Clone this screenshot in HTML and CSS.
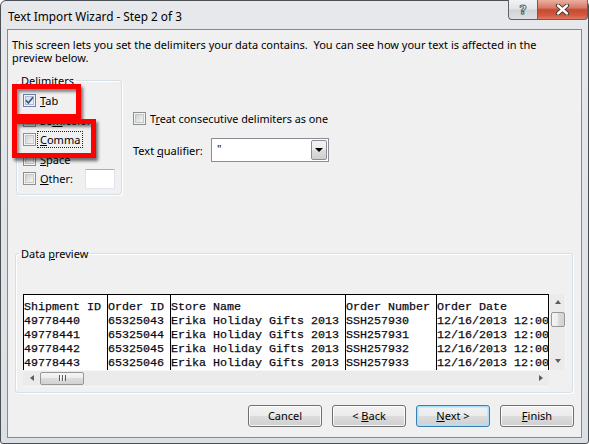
FILE: index.html
```html
<!DOCTYPE html>
<html>
<head>
<meta charset="utf-8">
<title>Text Import Wizard</title>
<link rel="stylesheet" href="styles.css">
</head>
<body>
<div class="window">
  <div class="titlebar">
    <span class="title">Text Import Wizard - Step 2 of 3</span>
    <div class="caption">
      <div class="cap help"><span class="qmark">?</span></div>
      <div class="cap close">
        <svg width="15" height="11" viewBox="0 0 15 11"><path d="M3 1.5 L12 9.5 M12 1.5 L3 9.5" stroke="#3b2a28" stroke-width="4.2" stroke-linecap="round" fill="none"/><path d="M3 1.5 L12 9.5 M12 1.5 L3 9.5" stroke="#fff" stroke-width="2.4" stroke-linecap="round" fill="none"/></svg>
      </div>
    </div>
  </div>
  <div class="client">
    <p class="intro">This screen lets you set the delimiters your data contains.&nbsp; You can see how your text is affected in the<br>preview below.</p>
    <div class="options">
      <fieldset class="group delims">
        <legend>Delimiters</legend>
        <div class="row"><span class="cb checked"><span class="cbi"><svg width="9" height="9" viewBox="0 0 9 9"><path d="M1 4.2 L3.4 7 L8 1.2" stroke="#3f4f86" stroke-width="1.7" fill="none"/></svg></span></span><span class="lbl"><u>T</u>ab</span></div>
        <div class="row"><span class="cb"><span class="cbi"></span></span><span class="lbl">Se<u>m</u>icolon</span></div>
        <div class="row"><span class="cb"><span class="cbi"></span></span><span class="lbl focus"><u>C</u>omma</span></div>
        <div class="row"><span class="cb"><span class="cbi"></span></span><span class="lbl"><u>S</u>pace</span></div>
        <div class="row"><span class="cb"><span class="cbi"></span></span><span class="lbl"><u>O</u>ther:</span><span class="textbox"></span></div>
      </fieldset>
      <div class="opts-right">
        <div class="row"><span class="cb"><span class="cbi"></span></span><span class="lbl">T<u>r</u>eat consecutive delimiters as one</span></div>
        <div class="qual">
          <span class="qlabel">Text <u>q</u>ualifier:</span>
          <div class="combo"><span class="val">"</span><span class="drop"><span class="tri-down"></span></span></div>
        </div>
      </div>
    </div>
    <fieldset class="group preview">
      <legend>Data <u>p</u>review</legend>
      <div class="pv">
        <div class="pv-main">
          <div class="grid">
            <div class="col c1">Shipment ID
49778440
49778441
49778442
49778443</div>
            <div class="col c2">Order ID
65325043
65325044
65325045
65325046</div>
            <div class="col c3">Store Name
Erika Holiday Gifts 2013
Erika Holiday Gifts 2013
Erika Holiday Gifts 2013
Erika Holiday Gifts 2013</div>
            <div class="col c4">Order Number
SSH257930
SSH257931
SSH257932
SSH257933</div>
            <div class="col c5">Order Date
12/16/2013 12:00:00 AM
12/16/2013 12:00:00 AM
12/16/2013 12:00:00 AM
12/16/2013 12:00:00 AM</div>
          </div>
          <div class="hscroll">
            <span class="sbtn"><span class="tri-left"></span></span>
            <span class="hthumb"><span class="grip"></span></span>
            <span class="htrack"></span>
            <span class="sbtn"><span class="tri-right"></span></span>
          </div>
        </div>
        <div class="vcol">
          <div class="vscroll">
            <span class="sbtn"><span class="tri-up"></span></span>
            <span class="vthumb"></span>
            <span class="vtrack"></span>
            <span class="sbtn"><span class="tri-down small"></span></span>
          </div>
        </div>
      </div>
    </fieldset>
    <div class="buttons">
      <span class="btn"><span>Cancel</span></span>
      <span class="btn"><span>&lt; <u>B</u>ack</span></span>
      <span class="btn default"><span><u>N</u>ext &gt;</span></span>
      <span class="btn"><span><u>F</u>inish</span></span>
    </div>
  </div>
  <div class="hl hl1"></div>
  <div class="hl hl2"></div>
</div>
</body>
</html>
```
FILE: styles.css
```css
* { box-sizing: border-box; }
html, body { margin: 0; padding: 0; }
body {
  width: 589px;
  height: 444px;
  overflow: hidden;
  background: #fff;
  font-family: "Noto Sans", "Open Sans", sans-serif;
  font-size: 11px;
  color: #000;
}
u { text-decoration: underline; text-underline-offset: 1px; }

.window {
  position: relative;
  width: 589px;
  height: 444px;
  border: 1px solid #4b5057;
  border-radius: 6px 6px 3px 3px;
  background: linear-gradient(#e6e8eb, #dcdfe3);
  display: flex;
  flex-direction: column;
}

.titlebar {
  height: 28px;
  flex: none;
  display: flex;
  align-items: flex-start;
}
.title {
  font-size: 11.8px;
  line-height: 16px;
  padding: 7px 0 0 7px;
}
.caption {
  margin-left: auto;
  margin-top: -1px;
  display: flex;
}
.cap {
  height: 20px;
  display: flex;
  align-items: center;
  justify-content: center;
  border: 1px solid #5d6168;
  border-top: none;
}
.help {
  width: 29px;
  border-right: none;
  border-radius: 0 0 0 4px;
  background: linear-gradient(#f2f3f5, #e1e3e6 48%, #cfd2d6 52%, #dfe1e4);
}
.qmark {
  font-family: "DejaVu Sans", sans-serif;
  font-weight: bold;
  font-size: 13px;
  line-height: 13px;
  color: #f4f4f4;
  -webkit-text-stroke: 0.9px #555a60;
}
.close {
  width: 51px;
  border-radius: 0 0 4px 0;
  background: linear-gradient(#eab0a2, #d77b66 40%, #c64a33 52%, #d2583f 80%, #e07a5f);
}

.client {
  flex: 1;
  margin: 0 6px 5px 6px;
  border: 1px solid #858a91;
  background: #f0f0f0;
  display: flex;
  flex-direction: column;
}
.intro {
  margin: 0;
  padding: 8px 0 0 4px;
  line-height: 13px;
}

.options {
  display: flex;
  margin: 10px 0 0 8px;
}
.group {
  margin: 0;
  min-width: 0;
  border: 1px solid #d5dfe5;
  border-radius: 3px;
  box-shadow: inset 1px 1px 0 #fff, 1px 1px 0 #fff;
}
.group legend {
  line-height: 13px;
  padding: 0 2px;
  margin-left: -4px;
}
.delims {
  width: 106px;
  padding: 4px 6px 5px 6px;
}
.row {
  height: 19.5px;
  display: flex;
  align-items: center;
}
.cb {
  width: 13px;
  height: 13px;
  flex: none;
  border: 1px solid #8e8f8f;
  background: #f4f4f4;
  padding: 1px;
  display: flex;
  margin-right: 4px;
}
.cbi {
  flex: 1;
  border: 1px solid #c3c6ca;
  background: linear-gradient(135deg, #cfd0d2, #f6f6f6);
  display: flex;
  align-items: center;
  justify-content: center;
}
.checked { border-color: #6b7fa8; }
.checked .cbi {
  border-color: #a9bbd6;
  background: linear-gradient(135deg, #cfdbee, #f4f7fc);
}
.checked svg { flex: none; margin: -1px; }
.lbl { line-height: 13px; white-space: nowrap; }
.opts-right .lbl { font-size: 10.8px; }
.focus {
  outline: 1px dotted #222;
  outline-offset: 1px;
  padding: 0 1px;
  margin-left: -1px;
}
.textbox {
  margin-left: auto;
  width: 30px;
  height: 20px;
  background: #fff;
  border: 1px solid #e2e3ea;
  border-top-color: #abadb3;
  border-bottom-color: #e3e9ef;
}

.opts-right {
  margin-left: 11px;
  padding-top: 34px;
  display: flex;
  flex-direction: column;
}
.opts-right .row { height: 20px; }
.qual {
  margin-top: 10px;
  display: flex;
  align-items: center;
}
.qlabel { width: 78px; line-height: 13px; }
.combo {
  width: 118px;
  height: 24px;
  background: #fff;
  border: 1px solid #8a8e94;
  display: flex;
  align-items: stretch;
}
.combo .val {
  flex: 1;
  padding: 3px 0 0 5px;
  line-height: 13px;
}
.drop {
  width: 16px;
  margin: 1px;
  border: 1px solid #8b8e93;
  border-radius: 2px;
  background: linear-gradient(#f3f3f3, #ebebeb 50%, #dddddd 50%, #cfcfcf);
  display: flex;
  align-items: center;
  justify-content: center;
}
.tri-down {
  width: 0; height: 0;
  border-left: 4px solid transparent;
  border-right: 4px solid transparent;
  border-top: 4px solid #000;
}
.tri-down.small {
  border-left-width: 3.5px;
  border-right-width: 3.5px;
  border-top: 4px solid #5c5c5c;
}
.tri-up {
  width: 0; height: 0;
  border-left: 3.5px solid transparent;
  border-right: 3.5px solid transparent;
  border-bottom: 4px solid #5c5c5c;
}
.tri-left {
  width: 0; height: 0;
  border-top: 3.5px solid transparent;
  border-bottom: 3.5px solid transparent;
  border-right: 4px solid #5c5c5c;
}
.tri-right {
  width: 0; height: 0;
  border-top: 3.5px solid transparent;
  border-bottom: 3.5px solid transparent;
  border-left: 4px solid #5c5c5c;
}

.preview {
  margin: 52px 8px 0 7px;
  padding: 34px 6px 5px 7px;
}
.pv { display: flex; }
.pv-main {
  width: 526px;
  display: flex;
  flex-direction: column;
}
.grid {
  height: 76px;
  background: #fff;
  border: 1px solid #000;
  border-bottom: none;
  display: flex;
  overflow: hidden;
  font-family: "Liberation Mono", "Courier New", monospace;
  font-size: 11.67px;
  line-height: 14px;
  color: #0a0a14;
  -webkit-text-stroke: 0.25px #0a0a14;
}
.col {
  white-space: pre;
  overflow: hidden;
  flex: none;
  padding-top: 5px;
}
.c1 { width: 83px; }
.c2 { width: 63px; border-left: 1px solid #000; }
.c3 { width: 175px; border-left: 1px solid #000; }
.c4 { width: 91px; border-left: 1px solid #000; }
.c5 { flex: 1; border-left: 1px solid #000; }

.hscroll {
  height: 17px;
  display: flex;
  background: #ebebeb;
  border-top: 1px solid #f6f6f6;
  border-bottom: 1px solid #f6f6f6;
}
.sbtn {
  width: 17px;
  height: 17px;
  flex: none;
  display: flex;
  align-items: center;
  justify-content: center;
}
.hscroll .sbtn { height: 15px; }
.hthumb {
  width: 44px;
  margin: 1px 0;
  border: 1px solid #979797;
  border-radius: 2px;
  background: linear-gradient(#f5f5f5, #ececec 50%, #dcdcdc 50%, #d2d2d2);
  display: flex;
  align-items: center;
  justify-content: center;
}
.grip {
  width: 7px;
  height: 6px;
  background: repeating-linear-gradient(90deg, #5c5c5c 0 1px, #f8f8f8 1px 2px, transparent 2px 3px);
}
.htrack { flex: 1; }

.vcol {
  width: 17px;
  display: flex;
  flex-direction: column;
}
.vscroll {
  height: 76px;
  display: flex;
  flex-direction: column;
  align-items: center;
  background: #ebebeb;
  border-left: 1px solid #f6f6f6;
  border-right: 1px solid #f6f6f6;
}
.vscroll .sbtn { width: 15px; }
.vthumb {
  width: 14px;
  height: 15px;
  flex: none;
  margin-top: 1px;
  border: 1px solid #979797;
  border-radius: 2px;
  background: linear-gradient(90deg, #f5f5f5, #ececec 50%, #dcdcdc 50%, #d2d2d2);
}
.vtrack { flex: 1; }

.buttons {
  margin-top: 12px;
  padding-right: 7px;
  display: flex;
  justify-content: flex-end;
  gap: 10px;
}
.btn {
  width: 74px;
  height: 22px;
  border: 1px solid #707070;
  border-radius: 3px;
  background: linear-gradient(#f2f2f2, #ebebeb 50%, #dddddd 50%, #cfcfcf);
  box-shadow: inset 0 0 0 1px rgba(255,255,255,0.8);
  display: flex;
  align-items: center;
  justify-content: center;
  line-height: 13px;
}
.btn.default {
  border-color: #3c7fb1;
  box-shadow: inset 0 0 0 1px #a7e0fa, inset 0 0 0 2px rgba(180,230,250,0.6);
}

.hl {
  position: absolute;
  border: 5px solid #ff0000;
  box-shadow: 2px 3px 3px rgba(0,0,0,0.55), inset 2px 3px 3px rgba(0,0,0,0.45);
}
.hl1 { left: 11px; top: 83px; width: 69px; height: 35px; }
.hl2 { left: 11px; top: 118px; width: 84px; height: 39px; }
```
